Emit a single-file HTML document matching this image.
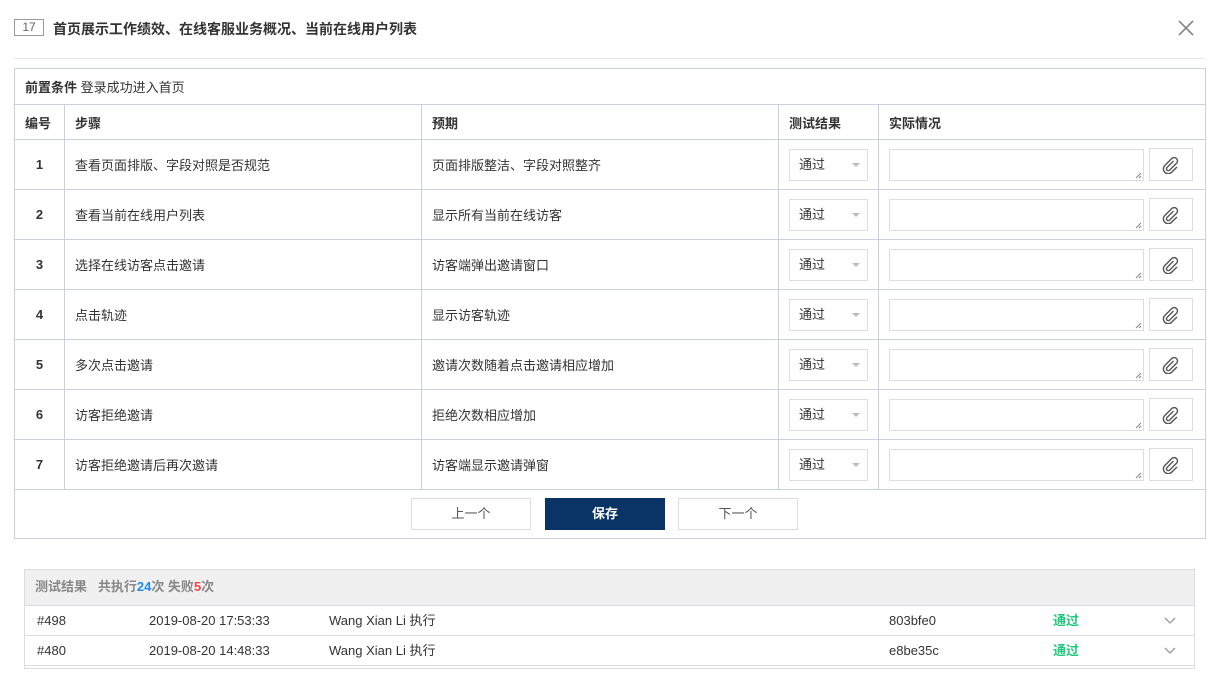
<!DOCTYPE html>
<html><head><meta charset="utf-8"><style>
*{box-sizing:border-box;margin:0;padding:0}
body{width:1222px;height:669px;overflow:hidden;background:#fff;font-family:"Liberation Sans","Noto Sans CJK SC",sans-serif;font-size:13px;color:#333;position:relative}
.a{position:absolute}
.num{left:14px;top:19px;width:30px;height:17px;border:1px solid #999;font-size:12px;color:#666;text-align:center;line-height:15px}
.title{left:53px;top:19px;font-size:14px;font-weight:bold;color:#333}
.hl{left:14px;top:58px;width:1191px;height:1px;background:#e8e8e8}
table{position:absolute;left:14px;top:68px;width:1192px;border-collapse:collapse}
td{border:1px solid #ccd0dc;padding:0 10px;height:50px}
tr.h td{height:35px;font-weight:bold}
td.n{text-align:center;font-weight:bold;width:50px}
.sel{width:79px;height:32px;border:1px solid #dcdde2;padding-left:9px;line-height:29px;position:relative}
.sel:after{content:"";position:absolute;right:7px;top:13px;border:4px solid transparent;border-top:4px solid #bbb}
.ta{display:inline-block;vertical-align:middle;width:255px;height:32px;border:1px solid #dcdde2;position:relative}
.att{display:inline-block;vertical-align:middle;width:44px;height:33px;border:1px solid #dcdde2;margin-left:5px;text-align:center;padding-top:7px}
.btn{top:498px;width:120px;height:32px;border:1px solid #dcdde2;text-align:center;line-height:30px;color:#555}
.bx{left:24px;width:1171px;border:1px solid #dcdde2;border-top:none}
.r{height:30px;line-height:29px;border-top:1px solid #dcdde2;position:relative}
.r span{position:absolute}
</style></head><body>
<div class="a num">17</div>
<div class="a title">首页展示工作绩效、在线客服业务概况、当前在线用户列表</div>
<svg class="a" style="left:1178px;top:20px" width="16" height="16"><path d="M1 1L15 15M15 1L1 15" stroke="#888" stroke-width="1.6"/></svg>
<div class="a hl"></div>
<table>
<tr style="height:36px"><td colspan="5" style="height:36px"><b>前置条件</b> 登录成功进入首页</td></tr>
<tr class="h"><td style="width:50px">编号</td><td style="width:357px">步骤</td><td style="width:357px">预期</td><td style="width:100px">测试结果</td><td>实际情况</td></tr>
<tr><td class="n">1</td><td>查看页面排版、字段对照是否规范</td><td>页面排版整洁、字段对照整齐</td><td><div class="sel">通过</div></td><td><span class="ta"></span><span class="att">ATT</span></td></tr>
<tr><td class="n">2</td><td>查看当前在线用户列表</td><td>显示所有当前在线访客</td><td><div class="sel">通过</div></td><td><span class="ta"></span><span class="att">ATT</span></td></tr>
<tr><td class="n">3</td><td>选择在线访客点击邀请</td><td>访客端弹出邀请窗口</td><td><div class="sel">通过</div></td><td><span class="ta"></span><span class="att">ATT</span></td></tr>
<tr><td class="n">4</td><td>点击轨迹</td><td>显示访客轨迹</td><td><div class="sel">通过</div></td><td><span class="ta"></span><span class="att">ATT</span></td></tr>
<tr><td class="n">5</td><td>多次点击邀请</td><td>邀请次数随着点击邀请相应增加</td><td><div class="sel">通过</div></td><td><span class="ta"></span><span class="att">ATT</span></td></tr>
<tr><td class="n">6</td><td>访客拒绝邀请</td><td>拒绝次数相应增加</td><td><div class="sel">通过</div></td><td><span class="ta"></span><span class="att">ATT</span></td></tr>
<tr><td class="n">7</td><td>访客拒绝邀请后再次邀请</td><td>访客端显示邀请弹窗</td><td><div class="sel">通过</div></td><td><span class="ta"></span><span class="att">ATT</span></td></tr>
<tr><td colspan="5" style="height:49px"></td></tr>
</table>
<div class="a btn" style="left:411px">上一个</div>
<div class="a btn" style="left:545px;background:#0b3466;border-color:#0b3466;color:#fff;font-weight:bold">保存</div>
<div class="a btn" style="left:678px">下一个</div>
<div class="a bx" style="top:569px;height:100px">
<div style="height:36px;background:#f0f0f0;border-top:1px solid #dcdde2;line-height:34px;padding-left:10px;font-weight:bold;color:#888">测试结果 &nbsp; 共执行<span style="color:#1e8bf0">24</span>次 失败<span style="color:#f04848">5</span>次</div>
<div class="r"><span style="left:12px">#498</span><span style="left:124px">2019-08-20 17:53:33</span><span style="left:304px">Wang Xian Li 执行</span><span style="left:864px">803bfe0</span><span style="left:1028px;color:#1dc97a;font-weight:bold">通过</span><svg class="a" style="left:1139px;top:11px" width="12" height="8"><path d="M1 1L6 6L11 1" fill="none" stroke="#999" stroke-width="1.3"/></svg></div>
<div class="r"><span style="left:12px">#480</span><span style="left:124px">2019-08-20 14:48:33</span><span style="left:304px">Wang Xian Li 执行</span><span style="left:864px">e8be35c</span><span style="left:1028px;color:#1dc97a;font-weight:bold">通过</span><svg class="a" style="left:1139px;top:11px" width="12" height="8"><path d="M1 1L6 6L11 1" fill="none" stroke="#999" stroke-width="1.3"/></svg></div>
<div class="r"></div>
</div>
<script>
document.querySelectorAll('.att').forEach(e=>{e.innerHTML='<svg width="20" height="18" viewBox="0 0 20 18"><path d="M12.5 5L6 11.5a1.8 1.8 0 0 0 2.6 2.6L15.5 7.2a3.3 3.3 0 0 0-4.7-4.7L3.8 9.5a4.8 4.8 0 0 0 6.8 6.8L16 11" fill="none" stroke="#555" stroke-width="1.4"/></svg>'});
document.querySelectorAll('.ta').forEach(e=>{e.innerHTML='<svg style="position:absolute;right:1px;bottom:1px" width="7" height="7"><path d="M1 6L6 1M4 6L6 4" stroke="#888"/></svg>'});
</script>
</body></html>
